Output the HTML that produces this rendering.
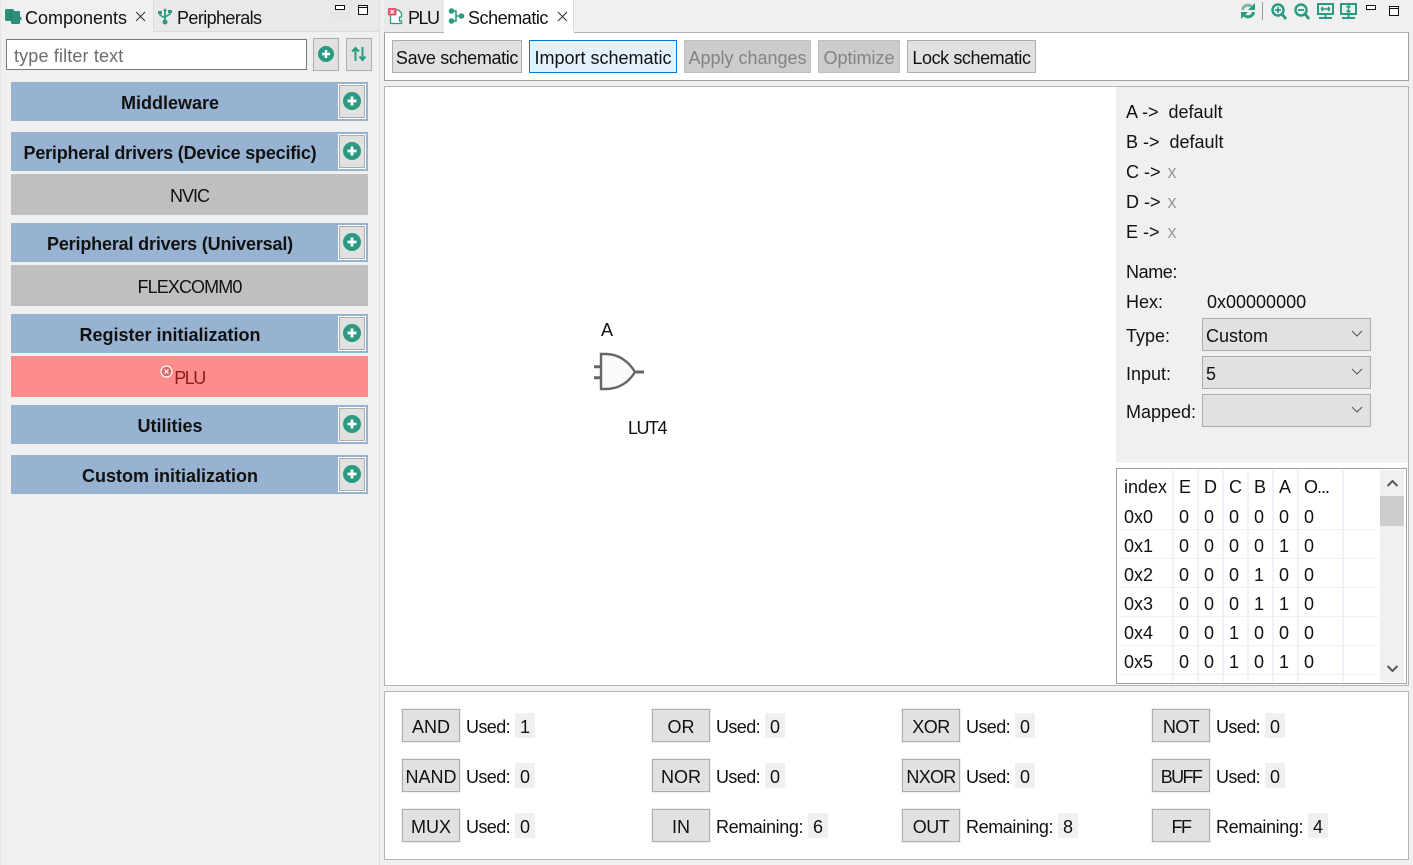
<!DOCTYPE html>
<html><head><meta charset="utf-8"><title>Schematic</title>
<style>
html,body{margin:0;padding:0}
body{width:1413px;height:865px;position:relative;overflow:hidden;background:#f0f0f0;font-family:"Liberation Sans",sans-serif;font-size:18px;color:#111}
.a,.t,.b,.c{position:absolute;box-sizing:border-box}
.t{white-space:nowrap;line-height:22px;height:22px}
.c{text-align:center;line-height:22px;white-space:nowrap}
.sec{position:absolute;left:11px;width:357px;height:39px;background:#98b3d2;font-weight:bold;text-align:center;line-height:42px;padding-right:39px;box-sizing:border-box;white-space:nowrap}
.pb{position:absolute;box-sizing:border-box;left:328px;top:3px;width:26px;height:33px;background:#e1e1e1;border:1px solid #adadad;outline:1px solid #fff}
.pb svg{position:absolute;left:3px;top:6px}
.item{position:absolute;left:11px;width:357px;height:41px;background:#bfbfbf;text-align:center;line-height:45px;white-space:nowrap}
.btn{position:absolute;height:33px;background:#e1e1e1;border:1px solid #adadad;box-sizing:border-box;text-align:center;line-height:35px;white-space:nowrap}
.gb{width:58px;outline:1px solid #f0f0f0}
.val{position:absolute;width:20px;height:25px;background:#f0f0f0;text-align:center;line-height:29px}
.dis{background:#cccccc;color:#838383;border-color:#bfbfbf}
.sel{position:absolute;left:1202px;width:169px;height:33px;background:#e1e1e1;border:1px solid #adadad;box-sizing:border-box;line-height:35px;padding-left:3px}
.sel svg{position:absolute;left:148px;top:11px}
.h{position:absolute;left:1120px;width:258px;height:1px;background:#f0f0f0}
.v{position:absolute;top:470px;width:2px;height:212px;background:#eef2f9}
.u{letter-spacing:-.6px}
.r{letter-spacing:-.4px}
.x{color:#9a9a9a;position:relative}
</style></head>
<body>
<!-- left tabs -->
<div class="a" style="left:153px;top:0;width:227px;height:31px;background:#e9e9e9"></div>
<div class="a" style="left:153px;top:31px;width:227px;height:1px;background:#d9d9d9"></div>
<div class="a" style="left:0;top:0;width:1px;height:865px;background:#e4e4e4"></div>
<div class="a" style="left:379px;top:0;width:1px;height:865px;background:#dcdcdc"></div>
<div class="a" style="left:153px;top:0;width:1px;height:32px;background:#dcdcdc"></div>
<div class="a" style="left:330px;top:0;width:22px;height:20px;background:#e7e7e7"></div>
<svg class="a" style="left:4px;top:7px" width="18" height="18" viewBox="0 0 18 18"><rect x="1" y="2" width="9" height="12" rx="1.500" fill="#2a8f76"/><rect x="7" y="4" width="9" height="13" rx="1" fill="#2a8f76"/><rect x="15" y="10" width="2.500" height="3" fill="#2a8f76"/><path d="M7 4.500v9" stroke="#1f7561"/></svg>
<div class="t" style="left:25px;top:7px">Components</div>
<svg class="a" style="left:135px;top:11px" width="11" height="11" viewBox="0 0 11 11"><path d="M1 1l9 9M10 1l-9 9" stroke="#333" stroke-width="1"/></svg>
<svg class="a" style="left:158px;top:8px" width="14" height="17" viewBox="0 0 14 17"><path d="M7 2v11" stroke="#2a9a80" stroke-width="1.800" fill="none"/><path d="M2 5v2l5 3M12 4v2L7 9" stroke="#2a9a80" stroke-width="1.600" fill="none"/><circle cx="7" cy="14" r="2.500" fill="#2a9a80"/><rect x="0" y="3" width="4" height="3" fill="#2a9a80"/><rect x="10" y="2" width="4" height="3" fill="#2a9a80"/><path d="M5 3l2-3 2 3z" fill="#2a9a80"/></svg>
<div class="t" style="left:177px;top:7px;letter-spacing:-.6px">Peripherals</div>
<svg class="a" style="left:335px;top:5px" width="11" height="7"><rect x=".5" y=".5" width="9" height="4" fill="#fff" stroke="#111"/></svg>
<svg class="a" style="left:358px;top:5px" width="11" height="11"><rect x=".5" y=".5" width="9" height="9" fill="#fff" stroke="#111"/><path d="M0 2.500h10" stroke="#111"/></svg>

<!-- filter -->
<div class="a" style="left:6px;top:39px;width:301px;height:31px;background:#fff;border:1px solid #7a7a7a"></div>
<div class="t" style="left:14px;top:45px;color:#6d6d6d;letter-spacing:.15px">type filter text</div>
<div class="btn" style="left:313px;top:38px;width:26px;height:33px"></div>
<svg class="a" style="left:318px;top:46px" width="16" height="16" viewBox="0 0 16 16"><circle cx="8" cy="8" r="8" fill="#2a9a80"/><path d="M8 4v8M4 8h8" stroke="#fff" stroke-width="2.400"/></svg>
<div class="btn" style="left:346px;top:38px;width:26px;height:33px"></div>
<svg class="a" style="left:351px;top:46px" width="16" height="16" viewBox="0 0 16 16"><path d="M4.500 15V2M1 5.500L4.500 2 8 5.500M11.500 1v13M8.500 10.500l3 3.500 3-3.500" stroke="#2a9a80" stroke-width="2" fill="none"/></svg>

<!-- sections -->
<div class="sec" style="top:82px">Middleware<div class="pb"><svg width="18" height="18" viewBox="0 0 16 16"><circle cx="8" cy="8" r="8" fill="#2a9a80"/><path d="M8 4v8M4 8h8" stroke="#fff" stroke-width="2.400"/></svg></div></div>
<div class="sec" style="top:132px;letter-spacing:-.2px">Peripheral drivers (Device specific)<div class="pb"><svg width="18" height="18" viewBox="0 0 16 16"><circle cx="8" cy="8" r="8" fill="#2a9a80"/><path d="M8 4v8M4 8h8" stroke="#fff" stroke-width="2.400"/></svg></div></div>
<div class="item" style="top:174px;letter-spacing:-1px">NVIC</div>
<div class="sec" style="top:223px;letter-spacing:-.17px">Peripheral drivers (Universal)<div class="pb"><svg width="18" height="18" viewBox="0 0 16 16"><circle cx="8" cy="8" r="8" fill="#2a9a80"/><path d="M8 4v8M4 8h8" stroke="#fff" stroke-width="2.400"/></svg></div></div>
<div class="item" style="top:265px;letter-spacing:-.9px">FLEXCOMM0</div>
<div class="sec" style="top:314px">Register initialization<div class="pb"><svg width="18" height="18" viewBox="0 0 16 16"><circle cx="8" cy="8" r="8" fill="#2a9a80"/><path d="M8 4v8M4 8h8" stroke="#fff" stroke-width="2.400"/></svg></div></div>
<div class="item" style="top:356px;background:#ff8b8b;color:#8c1a24;letter-spacing:-1.500px">PLU</div>
<svg class="a" style="left:160px;top:365px" width="13" height="13" viewBox="0 0 13 13"><circle cx="6.500" cy="6.500" r="5.500" fill="#d86a6a" stroke="#fff" stroke-width="1.200"/><path d="M4.500 4.500l4 4M8.500 4.500l-4 4" stroke="#fff" stroke-width="1.200"/></svg>
<div class="sec" style="top:405px">Utilities<div class="pb"><svg width="18" height="18" viewBox="0 0 16 16"><circle cx="8" cy="8" r="8" fill="#2a9a80"/><path d="M8 4v8M4 8h8" stroke="#fff" stroke-width="2.400"/></svg></div></div>
<div class="sec" style="top:455px">Custom initialization<div class="pb"><svg width="18" height="18" viewBox="0 0 16 16"><circle cx="8" cy="8" r="8" fill="#2a9a80"/><path d="M8 4v8M4 8h8" stroke="#fff" stroke-width="2.400"/></svg></div></div>

<!-- right tabs -->
<div class="a" style="left:384px;top:0;width:60px;height:32px;background:#e9e9e9"></div>
<div class="a" style="left:444px;top:0;width:130px;height:32px;background:#fff;border-right:1px solid #d9d9d9"></div>
<svg class="a" style="left:388px;top:8px" width="16" height="17" viewBox="0 0 16 17"><path d="M2.500 7v8.500h11V13h-2v-4h2V5l-3-3H6" stroke="#2a9a80" fill="#fff" stroke-width="1.300"/><rect x="0" y="0" width="8.500" height="7.500" rx="1" fill="#e0566a"/><path d="M2.500 2l3.500 3.500M6 2L2.500 5.500" stroke="#fff" stroke-width="1.200"/></svg>
<div class="t" style="left:408px;top:7px;letter-spacing:-1.500px">PLU</div>
<svg class="a" style="left:448px;top:8px" width="17" height="16" viewBox="0 0 17 16"><circle cx="3.500" cy="3" r="2.800" fill="#2a9a80"/><circle cx="3.500" cy="13" r="2.800" fill="#2a9a80"/><circle cx="13.500" cy="8" r="2.800" fill="#2a9a80"/><path d="M3 3h5v10H3M8 8h6" stroke="#2a9a80" stroke-width="1.600" fill="none"/></svg>
<div class="t" style="left:468px;top:7px;letter-spacing:-.45px">Schematic</div>
<svg class="a" style="left:557px;top:11px" width="11" height="11" viewBox="0 0 11 11"><path d="M1 1l9 9M10 1l-9 9" stroke="#333"/></svg>

<!-- toolbar icons -->
<svg class="a" style="left:1240px;top:2px" width="16" height="18" viewBox="0 0 16 18"><path d="M2.500 8a5.500 5.500 0 0 1 9-3.500" fill="none" stroke="#7fb8a8" stroke-width="3"/><path d="M15 1v7H8l3-3z" fill="#2a9a80"/><path d="M13.500 10a5.500 5.500 0 0 1-9 3.500" fill="none" stroke="#2a9a80" stroke-width="3"/><path d="M1 17v-7h7l-3 3z" fill="#2a9a80"/></svg>
<div class="a" style="left:1262px;top:2px;width:1px;height:18px;background:#9a9a9a"></div>
<svg class="a" style="left:1271px;top:3px" width="16" height="17" viewBox="0 0 16 17"><circle cx="7" cy="7" r="5.500" fill="none" stroke="#2a9a80" stroke-width="2.400"/><path d="M11 11l4 5" stroke="#2a9a80" stroke-width="2.800"/><path d="M7 4v6M4 7h6" stroke="#2a9a80" stroke-width="1.800"/></svg>
<svg class="a" style="left:1294px;top:3px" width="16" height="17" viewBox="0 0 16 17"><circle cx="7" cy="7" r="5.500" fill="none" stroke="#2a9a80" stroke-width="2.400"/><path d="M11 11l4 5" stroke="#2a9a80" stroke-width="2.800"/><path d="M4 7h6" stroke="#2a9a80" stroke-width="1.800"/></svg>
<svg class="a" style="left:1317px;top:3px" width="17" height="16" viewBox="0 0 17 16"><rect x="1" y="1" width="15" height="10" fill="none" stroke="#2a9a80" stroke-width="2"/><path d="M8.500 11v3M2 15h13" stroke="#2a9a80" stroke-width="2"/><path d="M4 6h9M4 6l2-2M4 6l2 2M13 6l-2-2M13 6l-2 2" stroke="#2a9a80" stroke-width="1.400" fill="none"/></svg>
<svg class="a" style="left:1340px;top:3px" width="17" height="16" viewBox="0 0 17 16"><rect x="1" y="1" width="15" height="10" fill="none" stroke="#2a9a80" stroke-width="2"/><path d="M8.500 11v3M2 15h13" stroke="#2a9a80" stroke-width="2"/><path d="M8.500 2.500v7M8.500 2.500l-2 2M8.500 2.500l2 2M8.500 9.500l-2-2M8.500 9.500l2-2" stroke="#2a9a80" stroke-width="1.400" fill="none"/></svg>
<svg class="a" style="left:1366px;top:5px" width="11" height="7"><rect x=".5" y=".5" width="9" height="4" fill="#fff" stroke="#111"/></svg>
<svg class="a" style="left:1389px;top:6px" width="11" height="11"><rect x=".5" y=".5" width="9" height="9" fill="#fff" stroke="#111"/><path d="M0 2.500h10" stroke="#111"/></svg>

<!-- toolbar -->
<div class="a" style="left:384px;top:32px;width:1025px;height:49px;background:#fff;border:1px solid #a0a0a0;border-top-color:#b4b4b4"></div>
<div class="a" style="left:444px;top:31px;width:130px;height:2px;background:#fff"></div>
<div class="btn" style="left:392px;top:40px;width:130px;letter-spacing:-.35px">Save schematic</div>
<div class="btn" style="left:529px;top:40px;width:148px;background:#e5f1fb;border-color:#0078d7">Import schematic</div>
<div class="btn dis" style="left:684px;top:40px;width:127px">Apply changes</div>
<div class="btn dis" style="left:818px;top:40px;width:82px">Optimize</div>
<div class="btn" style="left:907px;top:40px;width:129px;letter-spacing:-.42px">Lock schematic</div>

<!-- schematic -->
<div class="a" style="left:384px;top:86px;width:1025px;height:600px;background:#fff;border:1px solid #b4b4b4"></div>
<div class="t" style="left:601px;top:319px">A</div>
<svg class="a" style="left:592px;top:350px" width="54" height="42" viewBox="0 0 54 42"><path d="M9 4h5c13 0 23 8 29 18-6 10-16 17-29 17H9z" fill="#fafafa" stroke="#666" stroke-width="2.400"/><path d="M2 16.700h7M2 27.700h7M44 22h8" stroke="#666" stroke-width="3"/></svg>
<div class="t" style="left:628px;top:417px;letter-spacing:-1.500px">LUT4</div>

<!-- properties -->
<div class="a" style="left:1116px;top:87px;width:292px;height:376px;background:#f0f0f0"></div>
<div class="t" style="left:1126px;top:101px">A -&gt;&nbsp; default</div>
<div class="t" style="left:1126px;top:131px">B -&gt;&nbsp; default</div>
<div class="t" style="left:1126px;top:161px">C -&gt;&nbsp; <span class="x" style="left:-3px">x</span></div>
<div class="t" style="left:1126px;top:191px">D -&gt;&nbsp; <span class="x" style="left:-3px">x</span></div>
<div class="t" style="left:1126px;top:221px">E -&gt;&nbsp; &nbsp;<span class="x" style="left:-7px">x</span></div>
<div class="t" style="left:1126px;top:261px;letter-spacing:-.4px">Name:</div>
<div class="t" style="left:1126px;top:291px">Hex:</div>
<div class="t" style="left:1207px;top:291px">0x00000000</div>
<div class="t" style="left:1126px;top:325px">Type:</div>
<div class="t" style="left:1126px;top:363px">Input:</div>
<div class="t" style="left:1126px;top:401px">Mapped:</div>
<div class="sel" style="top:318px">Custom<svg width="12" height="8" viewBox="0 0 12 8"><path d="M1 1l5 5 5-5" stroke="#555" fill="none"/></svg></div>
<div class="sel" style="top:356px">5<svg width="12" height="8" viewBox="0 0 12 8"><path d="M1 1l5 5 5-5" stroke="#555" fill="none"/></svg></div>
<div class="sel" style="top:394px"><svg width="12" height="8" viewBox="0 0 12 8"><path d="M1 1l5 5 5-5" stroke="#555" fill="none"/></svg></div>

<!-- table -->
<div class="a" style="left:1116px;top:468px;width:291px;height:216px;background:#fff;border:1px solid #a0a0a0"></div>
<div class="v" style="left:1172px"></div><div class="v" style="left:1197px"></div><div class="v" style="left:1222px"></div><div class="v" style="left:1247px"></div><div class="v" style="left:1272px"></div><div class="v" style="left:1297px"></div><div class="v" style="left:1342px"></div>
<div class="h" style="top:529px"></div><div class="h" style="top:558px"></div><div class="h" style="top:587px"></div><div class="h" style="top:616px"></div><div class="h" style="top:645px"></div><div class="h" style="top:674px"></div>
<div class="t" style="left:1124px;top:476px">index</div><div class="t" style="left:1179px;top:476px">E</div><div class="t" style="left:1204px;top:476px">D</div><div class="t" style="left:1229px;top:476px">C</div><div class="t" style="left:1254px;top:476px">B</div><div class="t" style="left:1279px;top:476px">A</div><div class="t" style="left:1304px;top:476px;letter-spacing:-1px">O...</div>

<div class="t" style="left:1124px;top:506px">0x0</div><div class="t" style="left:1179px;top:506px">0</div><div class="t" style="left:1204px;top:506px">0</div><div class="t" style="left:1229px;top:506px">0</div><div class="t" style="left:1254px;top:506px">0</div><div class="t" style="left:1279px;top:506px">0</div><div class="t" style="left:1304px;top:506px">0</div>
<div class="t" style="left:1124px;top:535px">0x1</div><div class="t" style="left:1179px;top:535px">0</div><div class="t" style="left:1204px;top:535px">0</div><div class="t" style="left:1229px;top:535px">0</div><div class="t" style="left:1254px;top:535px">0</div><div class="t" style="left:1279px;top:535px">1</div><div class="t" style="left:1304px;top:535px">0</div>
<div class="t" style="left:1124px;top:564px">0x2</div><div class="t" style="left:1179px;top:564px">0</div><div class="t" style="left:1204px;top:564px">0</div><div class="t" style="left:1229px;top:564px">0</div><div class="t" style="left:1254px;top:564px">1</div><div class="t" style="left:1279px;top:564px">0</div><div class="t" style="left:1304px;top:564px">0</div>
<div class="t" style="left:1124px;top:593px">0x3</div><div class="t" style="left:1179px;top:593px">0</div><div class="t" style="left:1204px;top:593px">0</div><div class="t" style="left:1229px;top:593px">0</div><div class="t" style="left:1254px;top:593px">1</div><div class="t" style="left:1279px;top:593px">1</div><div class="t" style="left:1304px;top:593px">0</div>
<div class="t" style="left:1124px;top:622px">0x4</div><div class="t" style="left:1179px;top:622px">0</div><div class="t" style="left:1204px;top:622px">0</div><div class="t" style="left:1229px;top:622px">1</div><div class="t" style="left:1254px;top:622px">0</div><div class="t" style="left:1279px;top:622px">0</div><div class="t" style="left:1304px;top:622px">0</div>
<div class="t" style="left:1124px;top:651px">0x5</div><div class="t" style="left:1179px;top:651px">0</div><div class="t" style="left:1204px;top:651px">0</div><div class="t" style="left:1229px;top:651px">1</div><div class="t" style="left:1254px;top:651px">0</div><div class="t" style="left:1279px;top:651px">1</div><div class="t" style="left:1304px;top:651px">0</div>

<div class="a" style="left:1380px;top:470px;width:24px;height:212px;background:#f0f0f0"></div>
<div class="a" style="left:1380px;top:496px;width:24px;height:30px;background:#cdcdcd"></div>
<svg class="a" style="left:1386px;top:478px" width="13" height="11" viewBox="0 0 13 11"><path d="M1.500 8l5-5 5 5" stroke="#555" stroke-width="2" fill="none"/></svg>
<svg class="a" style="left:1386px;top:664px" width="13" height="11" viewBox="0 0 13 11"><path d="M1.500 2l5 5 5-5" stroke="#555" stroke-width="2" fill="none"/></svg>

<!-- bottom -->
<div class="a" style="left:384px;top:691px;width:1025px;height:169px;background:#fff;border:1px solid #b4b4b4"></div>

<div class="btn gb" style="left:402px;top:709px">AND</div><div class="t u" style="left:466px;top:716px">Used:</div><div class="val" style="left:515px;top:713px">1</div>
<div class="btn gb" style="left:402px;top:759px">NAND</div><div class="t u" style="left:466px;top:766px">Used:</div><div class="val" style="left:515px;top:763px">0</div>
<div class="btn gb" style="left:402px;top:809px">MUX</div><div class="t u" style="left:466px;top:816px">Used:</div><div class="val" style="left:515px;top:813px">0</div>

<div class="btn gb" style="left:652px;top:709px">OR</div><div class="t u" style="left:716px;top:716px">Used:</div><div class="val" style="left:765px;top:713px">0</div>
<div class="btn gb" style="left:652px;top:759px">NOR</div><div class="t u" style="left:716px;top:766px">Used:</div><div class="val" style="left:765px;top:763px">0</div>
<div class="btn gb" style="left:652px;top:809px">IN</div><div class="t r" style="left:716px;top:816px">Remaining:</div><div class="val" style="left:808px;top:813px">6</div>

<div class="btn gb" style="left:902px;top:709px;letter-spacing:-.5px">XOR</div><div class="t u" style="left:966px;top:716px">Used:</div><div class="val" style="left:1015px;top:713px">0</div>
<div class="btn gb" style="left:902px;top:759px;letter-spacing:-.7px">NXOR</div><div class="t u" style="left:966px;top:766px">Used:</div><div class="val" style="left:1015px;top:763px">0</div>
<div class="btn gb" style="left:902px;top:809px;letter-spacing:-.5px">OUT</div><div class="t r" style="left:966px;top:816px">Remaining:</div><div class="val" style="left:1058px;top:813px">8</div>

<div class="btn gb" style="left:1152px;top:709px;letter-spacing:-.6px">NOT</div><div class="t u" style="left:1216px;top:716px">Used:</div><div class="val" style="left:1265px;top:713px">0</div>
<div class="btn gb" style="left:1152px;top:759px;letter-spacing:-1.600px">BUFF</div><div class="t u" style="left:1216px;top:766px">Used:</div><div class="val" style="left:1265px;top:763px">0</div>
<div class="btn gb" style="left:1152px;top:809px;letter-spacing:-1.500px">FF</div><div class="t r" style="left:1216px;top:816px">Remaining:</div><div class="val" style="left:1308px;top:813px">4</div>
</body></html>
